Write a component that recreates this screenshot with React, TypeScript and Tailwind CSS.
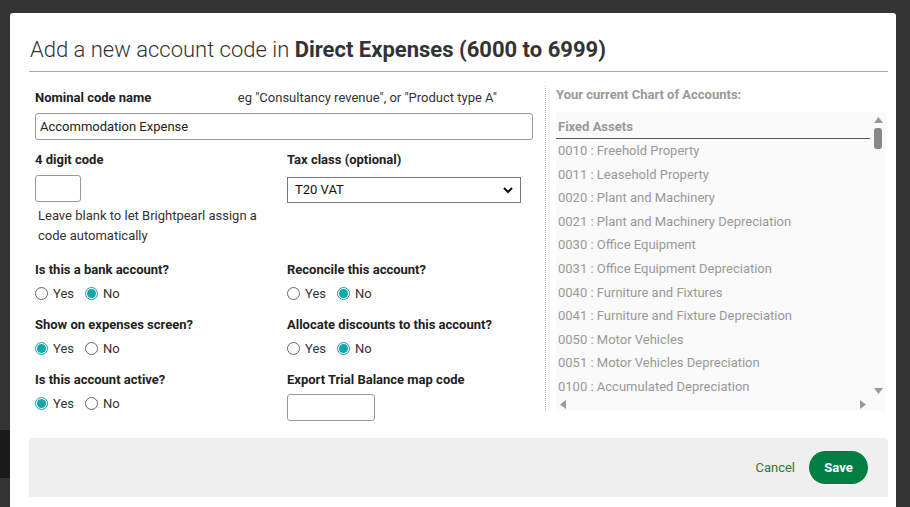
import React from "react";

const items = [
  "0010 : Freehold Property",
  "0011 : Leasehold Property",
  "0020 : Plant and Machinery",
  "0021 : Plant and Machinery Depreciation",
  "0030 : Office Equipment",
  "0031 : Office Equipment Depreciation",
  "0040 : Furniture and Fixtures",
  "0041 : Furniture and Fixture Depreciation",
  "0050 : Motor Vehicles",
  "0051 : Motor Vehicles Depreciation",
  "0100 : Accumulated Depreciation",
];

function Radio({ checked, label }: { checked: boolean; label: string }) {
  return (
    <span className="flex items-center gap-[5px] mr-[11px]">
      <span
        className={
          "w-[13px] h-[13px] rounded-full border flex items-center justify-center " +
          (checked ? "border-[#0aa3a8]" : "border-[#666]")
        }
      >
        {checked && <span className="w-[9px] h-[9px] rounded-full bg-[#12a6ab]" />}
      </span>
      <span className="text-[13px] text-[#333]">{label}</span>
    </span>
  );
}

function RadioGroup({ label, yes }: { label: string; yes: boolean }) {
  return (
    <div className="h-[55px]">
      <div className="text-[13px] font-bold text-[#222] h-[20px] leading-[20px]">{label}</div>
      <div className="flex mt-[4px]">
        <Radio checked={yes} label="Yes" />
        <Radio checked={!yes} label="No" />
      </div>
    </div>
  );
}

export default function App() {
  return (
    <div className="w-[910px] h-[507px] bg-[#333] relative overflow-hidden" style={{ fontFamily: "Roboto, 'Noto Sans', sans-serif" }}>
      <div className="absolute left-0 top-[430px] w-[10px] h-[48px] bg-[#1a1a1a]" />
      <div className="absolute left-[10px] top-[13px] w-[886px] h-[500px] bg-white rounded-t-[3px] pl-[19px] pr-[8px]">
        <div className="h-[59px] pt-[22px] text-[22px] leading-[30px] text-[#333] font-light border-b border-[#aaa] pl-[1px]">
          Add a new account code in <span className="font-bold">Direct Expenses (6000 to 6999)</span>
        </div>
        <div className="flex pt-[14px] h-[366px]">
          <div className="w-[516px] shrink-0 pl-[6px]">
            <div className="flex justify-between w-[462px] text-[13px] h-[24px] leading-[24px]">
              <span className="font-bold text-[#222]">Nominal code name</span>
              <span className="text-[#333]">eg "Consultancy revenue", or "Product type A"</span>
            </div>
            <div className="w-[498px] h-[27px] border border-[#999] rounded-[3px] mt-[3px] px-[4px] text-[13px] leading-[25px] text-[#222]">
              Accommodation Expense
            </div>
            <div className="flex mt-[10px]">
              <div className="w-[252px]">
                <div className="text-[13px] font-bold text-[#222] h-[20px] leading-[20px]">4 digit code</div>
                <div className="w-[46px] h-[27px] border border-[#999] rounded-[3px] mt-[5px]" />
                <div className="text-[13px] text-[#333] leading-[20px] mt-[4px] pl-[3px]">
                  Leave blank to let Brightpearl assign a<br />code automatically
                </div>
              </div>
              <div>
                <div className="text-[13px] font-bold text-[#222] h-[20px] leading-[20px]">Tax class (optional)</div>
                <div className="w-[234px] h-[26px] border border-[#777] mt-[7px] flex items-center justify-between px-[7px] text-[13px] text-[#111]">
                  <span>T20 VAT</span>
                  <svg width="10" height="8" viewBox="0 0 10 8"><path d="M1 2 L5 6 L9 2" stroke="#111" strokeWidth="2" fill="none" /></svg>
                </div>
              </div>
            </div>
            <div className="flex mt-[14px]">
              <div className="w-[252px]">
                <RadioGroup label="Is this a bank account?" yes={false} />
                <RadioGroup label="Show on expenses screen?" yes={true} />
                <RadioGroup label="Is this account active?" yes={true} />
              </div>
              <div>
                <RadioGroup label="Reconcile this account?" yes={false} />
                <RadioGroup label="Allocate discounts to this account?" yes={false} />
                <div className="text-[13px] font-bold text-[#222] h-[20px] leading-[20px]">Export Trial Balance map code</div>
                <div className="w-[88px] h-[27px] border border-[#999] rounded-[3px] mt-[4px]" />
              </div>
            </div>
          </div>
          <div className="border-l border-dotted border-[#bbb] pl-[10px] h-[325px] w-[343px]">
            <div className="text-[13px] font-bold text-[#999] h-[20px] leading-[20px] mt-[-1px]">Your current Chart of Accounts:</div>
            <div className="mt-[7px] bg-[#fafafa] h-[299px] w-[330px] flex flex-col">
              <div className="flex flex-1 overflow-hidden">
                <div className="w-[314px]">
                  <div className="h-[27px] border-b border-[#555] text-[13px] font-bold text-[#999] pl-[2px] pt-[6px] leading-[18px]">Fixed Assets</div>
                  {items.map((t) => (
                    <div key={t} className="h-[23.6px] leading-[23.6px] text-[13px] text-[#999] pl-[2px]">{t}</div>
                  ))}
                </div>
                <div className="w-[16px] flex flex-col items-center">
                  <svg width="9" height="6" className="mt-[5px]"><path d="M0 6 L4.5 0 L9 6Z" fill="#999" /></svg>
                  <div className="w-[8px] h-[21px] bg-[#888] rounded-[3px] mt-[5px]" />
                  <div className="flex-1" />
                  <svg width="9" height="6" className="mb-[3px]"><path d="M0 0 L4.5 6 L9 0Z" fill="#999" /></svg>
                </div>
              </div>
              <div className="h-[14px] flex items-center justify-between px-[4px] w-[314px]">
                <svg width="6" height="9"><path d="M6 0 L0 4.5 L6 9Z" fill="#999" /></svg>
                <svg width="6" height="9"><path d="M0 0 L6 4.5 L0 9Z" fill="#999" /></svg>
              </div>
            </div>
          </div>
        </div>
        <div className="h-[59px] bg-[#efefef] rounded-t-[4px] flex items-center justify-end pr-[20px] gap-[14px]">
          <span className="text-[13px] text-[#2b7a3a]">Cancel</span>
          <span className="h-[33px] w-[59px] rounded-full bg-[#007e45] text-white font-bold text-[13px] flex items-center justify-center">Save</span>
        </div>
      </div>
    </div>
  );
}
